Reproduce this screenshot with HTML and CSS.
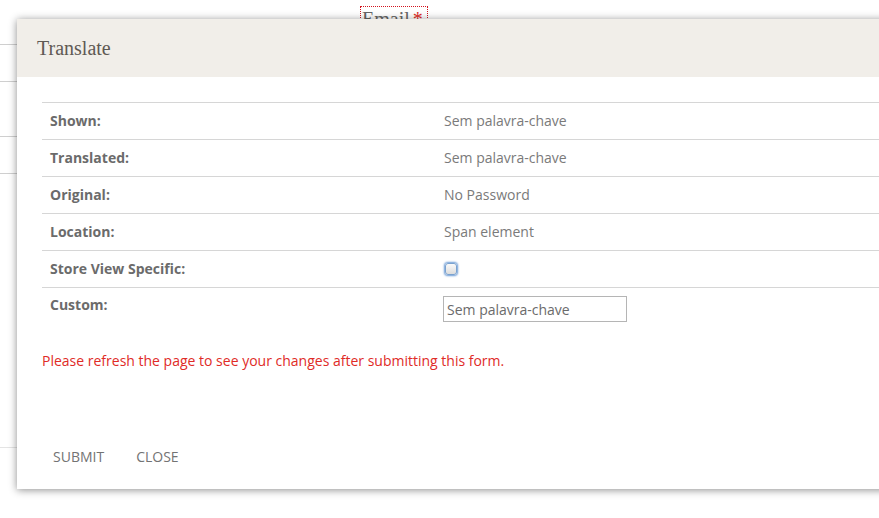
FILE: index.html
```html
<!DOCTYPE html>
<html>
<head>
<meta charset="utf-8">
<link rel="stylesheet" href="styles.css">
</head>
<body>
<div class="page">
  <div class="side">
    <div class="side-line l1"></div>
    <div class="side-line l2"></div>
    <div class="side-line l3"></div>
    <div class="side-line l4"></div>
    <div class="side-line l5"></div>
  </div>
  <div class="email-label"><span class="email-text">Email</span><span class="req">*</span></div>
</div>

<div class="modal">
  <header class="modal-header">
    <h1 class="modal-title">Translate</h1>
  </header>
  <div class="modal-body">
    <table class="info">
      <tr><th>Shown:</th><td>Sem palavra-chave</td></tr>
      <tr><th>Translated:</th><td>Sem palavra-chave</td></tr>
      <tr><th>Original:</th><td>No Password</td></tr>
      <tr><th>Location:</th><td>Span element</td></tr>
      <tr><th>Store View Specific:</th><td><span class="checkbox"></span></td></tr>
      <tr class="last"><th>Custom:</th><td><input class="custom" type="text" value="Sem palavra-chave"></td></tr>
    </table>
    <p class="notice">Please refresh the page to see your changes after submitting this form.</p>
  </div>
  <footer class="modal-footer">
    <button class="btn">Submit</button>
    <button class="btn">Close</button>
  </footer>
</div>
</body>
</html>
```

FILE: styles.css
```css
* { box-sizing: border-box; }
html, body { margin: 0; padding: 0; background: #fff; }
body {
  width: 879px;
  height: 518px;
  overflow: hidden;
  position: relative;
  font-family: "Open Sans", "Liberation Sans", sans-serif;
}
.page { display: flex; height: 518px; }
.side { width: 17px; display: flex; flex-direction: column; }
.side-line { height: 1px; background: #cfcfcf; }
.l1 { margin-top: 44px; }
.l2 { margin-top: 36px; }
.l3 { margin-top: 54px; }
.l4 { margin-top: 36px; }
.l5 { margin-top: 273px; background: #e4e4e4; }
.email-label {
  margin-left: 344px;
  margin-top: 7px;
  height: 24px;
  width: 66px;
  outline: 1px dotted #d2141e;
  font-family: "Liberation Serif", serif;
  font-size: 20px;
  color: #666;
  line-height: 24px;
  padding-left: 1px;
}
.req { color: #e02b27; margin-left: 3px; }

.modal {
  position: absolute;
  left: 17px;
  top: 19px;
  width: 880px;
  height: 470px;
  background: #fff;
  box-shadow: 0 1px 8px rgba(0,0,0,0.45);
  display: flex;
  flex-direction: column;
}
.modal-header {
  height: 58px;
  background: #f1eee9;
  padding: 0 20px;
  display: flex;
  align-items: center;
}
.modal-title {
  margin: 0;
  font-family: "Liberation Serif", serif;
  font-weight: normal;
  font-size: 20px;
  color: #5f5954;
  padding-top: 0;
}
.modal-body {
  padding: 25px 0 0 25px;
  flex: 1;
}
.info {
  width: 100%;
  border-collapse: collapse;
  font-size: 14px;
}
.info tr { border-top: 1px solid #d6d6d6; }
.info th {
  text-align: left;
  font-weight: 700;
  color: #6b6b6b;
  width: 402px;
  height: 37px;
  padding: 0 0 2px 8px;
  vertical-align: middle;
}
.info td {
  color: #7a7a7a;
  padding: 0 0 2px 0;
  vertical-align: middle;
}
.info tr.last th, .info tr.last td { vertical-align: top; padding-top: 7px; height: 44px; }
.info tr.last td { padding-top: 8px; }
.checkbox {
  display: block;
  width: 12px;
  height: 12px;
  border: 1px solid #7aa2cf;
  border-radius: 3px;
  background: linear-gradient(#fafafa, #dcdcdc);
  box-shadow: 0 0 2px 1px #6b9bd6;
  margin-left: 1px;
  margin-top: 2px;
}
.custom {
  width: 184px;
  height: 26px;
  border: 1px solid #b5b5b5;
  font-family: "Open Sans", "Liberation Sans", sans-serif;
  font-size: 14px;
  color: #6b6b6b;
  padding: 0 3px;
  margin-left: -1px;
}
.notice {
  margin: 19px 0 0 0;
  color: #e02b27;
  font-size: 14px;
}
.modal-footer {
  height: 66px;
  padding: 0 0 0 23px;
  display: flex;
  align-items: center;
}
.btn {
  background: none;
  border: none;
  font-family: "Open Sans", "Liberation Sans", sans-serif;
  font-size: 14px;
  text-transform: uppercase;
  color: #737373;
  padding: 5px 13px;
  margin: 0 6px 0 0;
  cursor: pointer;
}
```
